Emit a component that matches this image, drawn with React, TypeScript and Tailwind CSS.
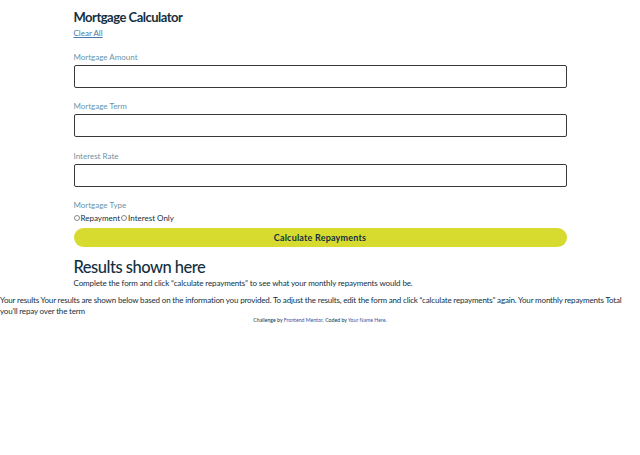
import React from "react";

const label = "block text-[8px] leading-[10px] text-[#6b94a8]";
const input = "block mt-[3px] w-full h-[23px] border border-[#3a3a3a] rounded-[2px] bg-white";

export default function App() {
  return (
    <div className="bg-white min-h-[455px] text-[#133041]" style={{ fontFamily: "Lato, 'Noto Sans', sans-serif" }}>
      <div className="mx-auto w-[493px] pt-[9px]">
        <h1 className="text-[13px] font-bold leading-[16px] tracking-[-0.5px] text-[#133041]">Mortgage Calculator</h1>
        <a href="#" className="block mt-[3px] text-[8px] leading-[10px] text-[#4a78a8] underline">Clear All</a>
        <div className="mt-[14px]">
          <label className={label}>Mortgage Amount</label>
          <input className={input} />
        </div>
        <div className="mt-[13px]">
          <label className={label}>Mortgage Term</label>
          <input className={input} />
        </div>
        <div className="mt-[14px]">
          <label className={label}>Interest Rate</label>
          <input className={input} />
        </div>
        <div className="mt-[13px]">
          <div className="text-[8px] leading-[10px] text-[#6b94a8]">Mortgage Type</div>
          <div className="mt-[3px] flex items-center text-[8px] leading-[10px] text-[#133041]">
            <span className="inline-block w-[6px] h-[6px] rounded-full border border-[#888] mr-[1px]"></span>
            <span>Repayment</span>
            <span className="inline-block w-[6px] h-[6px] rounded-full border border-[#888] ml-[1px] mr-[1px]"></span>
            <span>Interest Only</span>
          </div>
        </div>
        <button className="mt-[5px] w-full h-[19px] rounded-full bg-[#d8db2f] text-[9px] tracking-[0.2px] font-bold text-[#133041] flex items-center justify-center">Calculate Repayments</button>
        <h2 className="mt-[10px] text-[16.5px] leading-[20px] font-medium tracking-[-0.5px] text-[#133041]">Results shown here</h2>
        <p className="mt-[1px] text-[8px] leading-[10px] tracking-[-0.12px] text-[#133041]">Complete the form and click “calculate repayments” to see what your monthly repayments would be.</p>
      </div>
      <p className="mt-[7px] text-[8px] leading-[11px] tracking-[-0.17px] text-[#133041]">
        Your results Your results are shown below based on the information you provided. To adjust the results, edit the form and click “calculate repayments” again. Your monthly repayments Total you'll repay over the term
      </p>
      <div className="mt-[0px] text-center text-[5.2px] leading-[7px] text-[#133041]">
        Challenge by <a href="#" className="text-[#3e52a3]">Frontend Mentor</a>. Coded by <a href="#" className="text-[#3e52a3]">Your Name Here</a>.
      </div>
    </div>
  );
}
